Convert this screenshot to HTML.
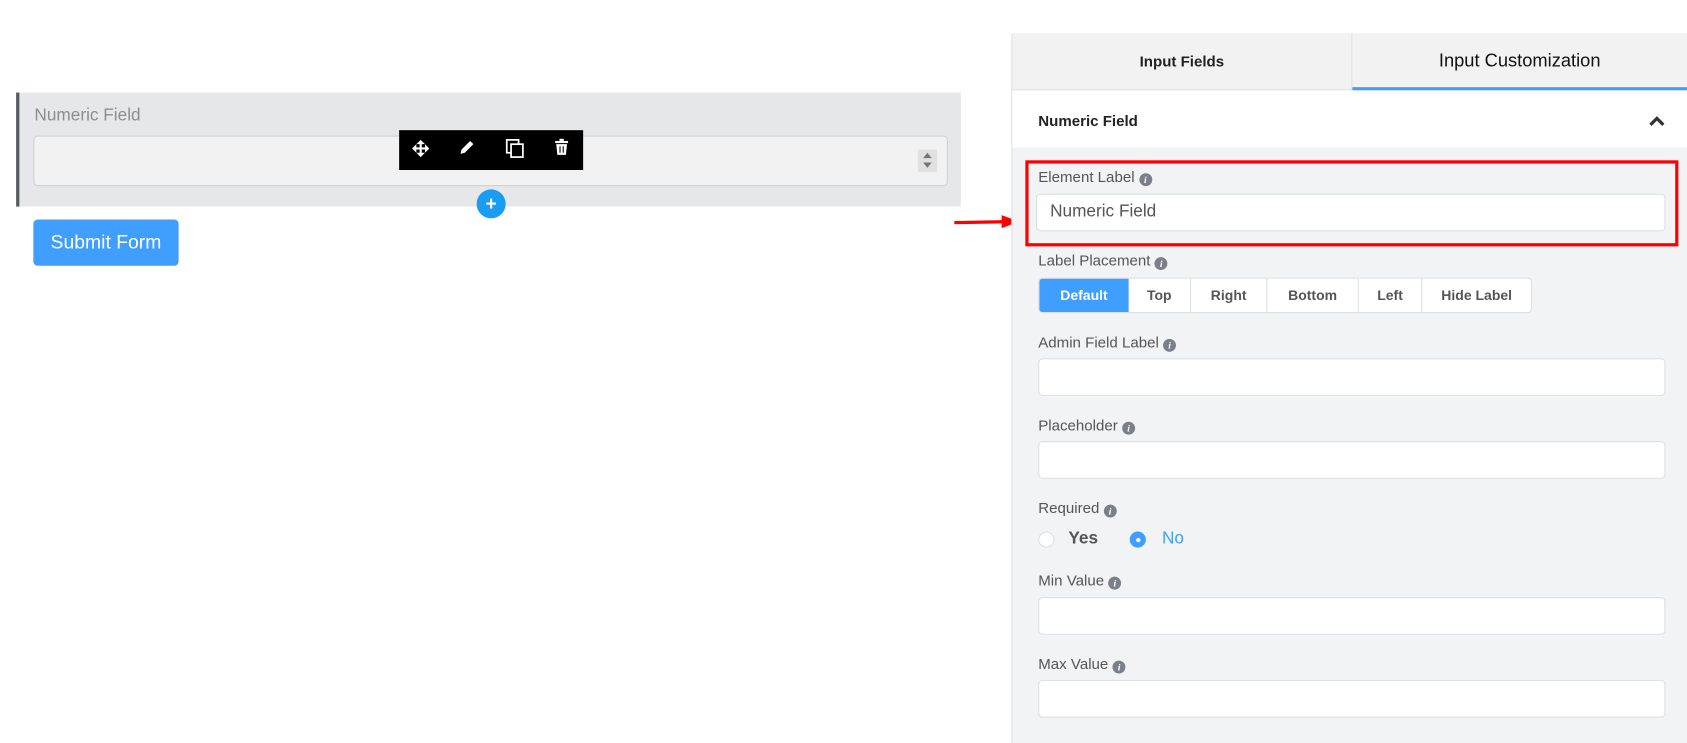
<!DOCTYPE html>
<html><head><meta charset="utf-8"><style>
*{box-sizing:border-box;margin:0;padding:0}
body{width:1687px;height:732px;background:#fff;position:relative;overflow:hidden;font-family:"Liberation Sans",sans-serif;color:#555}
#w{position:absolute;left:0;top:0;width:1568px;height:680px;transform:scale(1.0759);transform-origin:0 0}
.a{position:absolute}
.lbl{position:absolute;left:965px;font-size:14px;color:#555}
.i{display:inline-block;width:12px;height:12px;border-radius:50%;background:#7b8088;color:#fff;font-size:9px;font-style:italic;font-weight:bold;text-align:center;line-height:12px;vertical-align:-1px;margin-left:4px;font-family:"Liberation Serif",serif}
.inp{position:absolute;left:965px;width:583px;height:35px;background:#fff;border:1px solid #dcdfe4;border-radius:4px}
</style></head><body><div id="w">
<div class="a" style="left:15px;top:86px;width:878px;height:106px;background:#e6e7e9;border-left:3px solid #555b63"></div>
<div class="a" style="left:32px;top:99px;font-size:16px;color:#8b8e92">Numeric Field</div>
<div class="a" style="left:31px;top:126px;width:850px;height:47px;background:#f2f2f2;border:1px solid #cfd1d4;border-radius:4px"></div>
<div class="a" style="left:853px;top:139px;width:18px;height:21px;background:#e1e1e1"></div>
<div class="a" style="left:858px;top:142px;width:0;height:0;border-left:4px solid transparent;border-right:4px solid transparent;border-bottom:5px solid #777"></div>
<div class="a" style="left:858px;top:151px;width:0;height:0;border-left:4px solid transparent;border-right:4px solid transparent;border-top:5px solid #777"></div>
<div class="a" style="left:371px;top:121px;width:171px;height:37px;background:#000"></div>
<svg class="a" style="left:381px;top:128px" width="20" height="20" viewBox="0 0 20 20" fill="#fff"><path d="M10 2l4 4h-3v3h3V6l4 4-4 4v-3h-3v3h3l-4 4-4-4h3v-3H6v3l-4-4 4-4v3h3V6H6z"/></svg>
<svg class="a" style="left:425px;top:128px" width="18" height="18" viewBox="0 0 18 18"><path d="M3 15l1-4 8-8 3 3-8 8z" fill="#fff"/></svg>
<svg class="a" style="left:469px;top:128px" width="20" height="20" viewBox="0 0 20 20" fill="none" stroke="#fff" stroke-width="1.6"><rect x="2" y="2" width="11" height="12"/><rect x="6" y="6" width="11" height="12" fill="#000"/></svg>
<svg class="a" style="left:514px;top:128px" width="16" height="18" viewBox="0 0 16 18" fill="#fff"><rect x="2" y="3" width="12" height="2"/><rect x="6" y="1" width="4" height="2"/><path d="M3 6h10l-1 10H4z"/><rect x="6" y="8" width="1" height="6" fill="#000"/><rect x="9" y="8" width="1" height="6" fill="#000"/></svg>
<div class="a" style="left:443px;top:176px;width:27px;height:27px;border-radius:50%;background:#1a9cf2;color:#fff;font-size:18px;font-weight:bold;text-align:center;line-height:26px">+</div>
<div class="a" style="left:31px;top:204px;width:135px;height:43px;background:#409eff;border-radius:4px;color:#fff;font-size:18px;text-align:center;line-height:43px">Submit Form</div>
<div class="a" style="left:887px;top:205px;width:46px;height:3px;background:#f00;transform:rotate(-1deg)"></div>
<div class="a" style="left:931px;top:200px;width:0;height:0;border-top:6px solid transparent;border-bottom:6px solid transparent;border-left:16px solid #f00"></div>
<div class="a" style="left:940px;top:31px;width:628px;height:660px;background:#f2f3f5;border-left:1px solid #dfe1e4"></div>
<div class="a" style="left:941px;top:31px;width:316px;height:53px;background:#f2f2f2;border-right:1px solid #e0e0e0;border-bottom:1px solid #e0e0e0;font-size:14px;color:#222;text-align:center;line-height:53px;font-weight:bold">Input Fields</div>
<div class="a" style="left:1257px;top:31px;width:311px;height:53px;background:#f2f2f2;border-bottom:3px solid #409eff;font-size:17px;color:#111;text-align:center;line-height:51px">Input Customization</div>
<div class="a" style="left:941px;top:84px;width:627px;height:53px;background:#fff"></div>
<div class="a" style="left:965px;top:104px;font-size:14px;font-weight:bold;color:#222">Numeric Field</div>
<svg class="a" style="left:1532px;top:106px" width="16" height="12" viewBox="0 0 16 12"><path d="M2 10l6-6 6 6" fill="none" stroke="#333" stroke-width="3"/></svg>
<div class="a" style="left:953px;top:149px;width:607px;height:80px;border:3px solid #f00"></div>
<div class="lbl" style="top:156px">Element Label<span class="i">i</span></div>
<div class="inp" style="top:180px;height:35px;left:963px;width:585px;font-size:16px;color:#555;padding:7px 12px">Numeric Field</div>
<div class="lbl" style="top:234px">Label Placement<span class="i">i</span></div>
<div class="a" style="left:965px;top:258px;width:459px;height:33px;background:#fff;border:1px solid #dcdfe4;border-radius:4px;display:flex;font-size:13px;font-weight:bold;color:#555;line-height:31px;text-align:center;overflow:hidden">
<div style="width:83px;background:#409eff;color:#fff">Default</div>
<div style="width:58px;border-right:1px solid #dcdfe4">Top</div>
<div style="width:71px;border-right:1px solid #dcdfe4">Right</div>
<div style="width:85px;border-right:1px solid #dcdfe4">Bottom</div>
<div style="width:59px;border-right:1px solid #dcdfe4">Left</div>
<div style="flex:1">Hide Label</div></div>
<div class="lbl" style="top:310px">Admin Field Label<span class="i">i</span></div>
<div class="inp" style="top:333px"></div>
<div class="lbl" style="top:387px">Placeholder<span class="i">i</span></div>
<div class="inp" style="top:410px"></div>
<div class="lbl" style="top:464px">Required<span class="i">i</span></div>
<div class="a" style="left:965px;top:494px;width:15px;height:15px;border-radius:50%;background:#fff;border:1px solid #dcdfe4"></div>
<div class="a" style="left:993px;top:492px;font-size:16px;font-weight:bold;color:#555">Yes</div>
<div class="a" style="left:1050px;top:494px;width:15px;height:15px;border-radius:50%;background:#409eff"></div>
<div class="a" style="left:1056px;top:500px;width:4px;height:4px;border-radius:50%;background:#fff"></div>
<div class="a" style="left:1080px;top:492px;font-size:16px;color:#409eff">No</div>
<div class="lbl" style="top:531px">Min Value<span class="i">i</span></div>
<div class="inp" style="top:555px"></div>
<div class="lbl" style="top:609px">Max Value<span class="i">i</span></div>
<div class="inp" style="top:632px"></div>
</div></body></html>
